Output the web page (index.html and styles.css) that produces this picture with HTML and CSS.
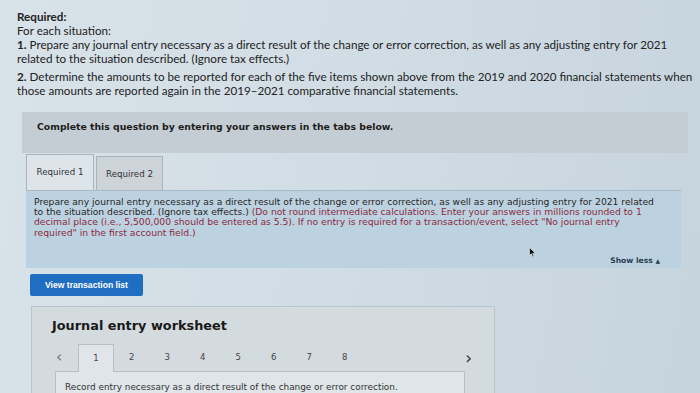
FILE: index.html
```
<!DOCTYPE html>
<html>
<head>
<meta charset="utf-8">
<link rel="stylesheet" href="styles.css">
</head>
<body>
<div class="page">
  <div class="question">
    <p class="req-title">Required:</p>
    <p>For each situation:</p>
    <p><b>1.</b> Prepare any journal entry necessary as a direct result of the change or error correction, as well as any adjusting entry for 2021<br>related to the situation described. (Ignore tax effects.)</p>
    <p class="gap"><b>2.</b> Determine the amounts to be reported for each of the five items shown above from the 2019 and 2020 financial statements when<br>those amounts are reported again in the 2019–2021 comparative financial statements.</p>
  </div>

  <div class="banner">Complete this question by entering your answers in the tabs below.</div>

  <div class="tabset">
    <div class="tabs">
      <div class="tab active">Required 1</div>
      <div class="tab">Required 2</div>
    </div>
    <div class="panel">
      <p class="instr">Prepare any journal entry necessary as a direct result of the change or error correction, as well as any adjusting entry for 2021 related<br>to the situation described. (Ignore tax effects.) <span class="red">(Do not round intermediate calculations. Enter your answers in millions rounded to 1<br>decimal place (i.e., 5,500,000 should be entered as 5.5). If no entry is required for a transaction/event, select "No journal entry<br>required" in the first account field.)</span></p>
      <div class="show-less">Show less <span class="tri">▲</span></div>
    </div>
  </div>

  <button class="view-btn">View transaction list</button>

  <div class="worksheet">
    <h2 class="ws-title">Journal entry worksheet</h2>
    <div class="pager">
      <span class="arrow prev">&lsaquo;</span>
      <span class="num current">1</span>
      <span class="num">2</span>
      <span class="num">3</span>
      <span class="num">4</span>
      <span class="num">5</span>
      <span class="num">6</span>
      <span class="num">7</span>
      <span class="num">8</span>
      <span class="spacer"></span>
      <span class="arrow next">&rsaquo;</span>
    </div>
    <div class="entry">Record entry necessary as a direct result of the change or error correction.</div>
  </div>

  <svg class="cursor" width="7" height="11" viewBox="0 0 7 11"><path d="M0.5 0.5 L0.5 8.5 L2.4 6.7 L3.8 10 L5 9.5 L3.7 6.3 L6.3 6.3 Z" fill="#111" stroke="#eee" stroke-width="0.6"/></svg>
</div>
</body>
</html>
```
FILE: styles.css
```
html, body {
  margin: 0;
  padding: 0;
}
body {
  width: 700px;
  height: 393px;
  overflow: hidden;
  background: linear-gradient(100deg, #d8e2e9 0%, #d0dce4 55%, #c6d4dd 100%);
}
.page {
  position: relative;
  padding-top: 10px;
}
.question {
  margin-left: 17px;
  font-family: Lato, "Open Sans", sans-serif;
  font-size: 11.65px;
  line-height: 14px;
  color: #222;
}
.question p {
  margin: 0;
  white-space: nowrap;
}
.question .gap {
  margin-top: 4px;
}
.req-title {
  font-weight: bold;
}
.question b {
  font-weight: bold;
}
.banner {
  margin: 14px 12px 0 22px;
  height: 41px;
  box-sizing: border-box;
  padding: 9px 0 0 15px;
  background: #c4cdd3;
  font-family: "DejaVu Sans", Verdana, sans-serif;
  font-weight: bold;
  font-size: 9.3px;
  line-height: 12px;
  color: #1c1c1c;
}
.tabset {
  margin: 1px 19px 0 26px;
}
.tabs {
  display: flex;
  align-items: flex-end;
  height: 36px;
}
.tab {
  box-sizing: border-box;
  font-family: "DejaVu Sans", Verdana, sans-serif;
  font-size: 8.7px;
  color: #333;
  display: flex;
  align-items: center;
  justify-content: center;
  border: 1px solid #aab3ba;
  border-bottom: none;
}
.tab.active {
  width: 68px;
  height: 36px;
  background: #dde5ea;
  padding-bottom: 1px;
}
.tab:not(.active) {
  width: 67px;
  height: 34px;
  margin-left: 2px;
  background: #cdd4d9;
  padding-top: 1px;
}
.panel {
  height: 78px;
  box-sizing: border-box;
  background: #bdd2e1;
  border-top: 1px solid #a8b8c4;
  padding: 6px 21px 0 8px;
  font-family: "DejaVu Sans", Verdana, sans-serif;
  font-size: 9.2px;
  line-height: 10.2px;
  color: #262626;
}
.instr {
  margin: 0;
  white-space: nowrap;
}
.red {
  color: #8a2a3d;
}
.show-less {
  margin-top: 18px;
  text-align: right;
  font-weight: bold;
  font-size: 7.6px;
  line-height: 10px;
  color: #2b3f52;
}
.tri {
  font-size: 6px;
}
.view-btn {
  display: block;
  margin: 6px 0 0 30px;
  width: 113px;
  height: 22px;
  padding: 0;
  border: none;
  border-radius: 2px;
  background: #1f6ec2;
  color: #fff;
  font-family: "Liberation Sans", Arial, sans-serif;
  font-weight: bold;
  font-size: 8.6px;
  cursor: pointer;
}
.worksheet {
  margin: 10px 0 0 31px;
  width: 464px;
  height: 100px;
  box-sizing: border-box;
  background: #d4dbdf;
  border: 1px solid #bcc5cb;
  border-bottom: none;
  padding: 11px 29px 0 23px;
}
.ws-title {
  margin: 0 0 0 -3px;
  font-family: "DejaVu Sans", Verdana, sans-serif;
  font-weight: bold;
  font-size: 12.85px;
  line-height: 16px;
  color: #1a1a1a;
}
.pager {
  display: flex;
  align-items: stretch;
  margin-top: 10px;
  height: 28px;
  font-family: "DejaVu Sans", Verdana, sans-serif;
  font-size: 8.5px;
  color: #444;
}
.arrow {
  display: flex;
  align-items: center;
  font-size: 16px;
  color: #777;
  padding-bottom: 4px;
}
.prev {
  width: 23px;
  padding-left: 1px;
  box-sizing: border-box;
}
.next {
  color: #333;
  font-size: 17px;
  padding-bottom: 0;
  margin-right: -7px;
}
.spacer {
  flex: 1;
}
.num {
  width: 35.5px;
  display: flex;
  align-items: center;
  justify-content: center;
  padding-bottom: 2px;
  box-sizing: border-box;
}
.num.current {
  width: 36px;
  background: #dfe5e8;
  border: 1px solid #b8c0c6;
  border-bottom: none;
}
.entry {
  width: 410px;
  box-sizing: border-box;
  height: 40px;
  background: #dfe5e8;
  border: 1px solid #b8c0c6;
  margin-top: -1px;
  padding: 9px 0 0 9px;
  font-family: "DejaVu Sans", Verdana, sans-serif;
  font-size: 8.9px;
  line-height: 12px;
  color: #333;
  white-space: nowrap;
}
.cursor {
  position: absolute;
  left: 529px;
  top: 247px;
}
```
